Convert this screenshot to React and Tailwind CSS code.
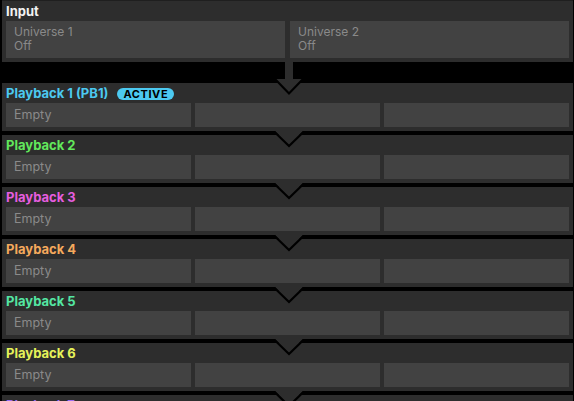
const playbacks = [
  { name: "Playback 1 (PB1)", color: "text-[#4cc9f0]", active: true },
  { name: "Playback 2", color: "text-[#62e85c]" },
  { name: "Playback 3", color: "text-[#e65ddf]" },
  { name: "Playback 4", color: "text-[#f5a95c]" },
  { name: "Playback 5", color: "text-[#54e6a3]" },
  { name: "Playback 6", color: "text-[#e6f25a]" },
  { name: "Playback 7", color: "text-[#9b6cf2]" },
];

// big arrow from the input block down into the first playback
function InputArrow() {
  return (
    <svg
      className="absolute left-[271px] top-[-21px]"
      width="32"
      height="36"
      viewBox="0 0 32 36"
    >
      <path d="M12 0H20V17H30L16 31L2 17H12Z" fill="#2d2d2d" />
      <polyline
        points="2,17 16,31.5 30,17"
        fill="none"
        stroke="#000"
        strokeWidth="2.2"
      />
    </svg>
  );
}

// small tab that links one playback to the next
function TabArrow() {
  return (
    <svg
      className="absolute left-[271px] top-[-4px]"
      width="32"
      height="18"
      viewBox="0 0 32 18"
    >
      <polygon points="2,0 30,0 16,14" fill="#2d2d2d" />
      <polyline
        points="1,0.5 16,15 31,0.5"
        fill="none"
        stroke="#000"
        strokeWidth="2.2"
      />
    </svg>
  );
}

function Playback({ pb, first }) {
  return (
    <div className="relative h-[48px] bg-[#2d2d2d] px-1 pt-px">
      {first ? <InputArrow /> : <TabArrow />}
      <div className="flex h-[19px] items-center gap-[9px]">
        <span className={`text-[13px] font-bold ${pb.color}`}>{pb.name}</span>
        {pb.active && (
          <span className="rounded-full bg-[#4cc9f0] px-[6px] text-[11px] font-bold leading-[12px] tracking-[0.6px] text-black">
            ACTIVE
          </span>
        )}
      </div>
      <div className="grid h-6 grid-cols-3 gap-1">
        {[0, 1, 2].map((i) => (
          <div key={i} className="flex items-center bg-[#424242] px-2">
            {i === 0 && <span className="text-[12.5px] text-[#8a8a8a]">Empty</span>}
          </div>
        ))}
      </div>
    </div>
  );
}

export default function App() {
  return (
    <div className="h-[401px] overflow-hidden bg-black pl-[2px] pr-px font-['Inter',sans-serif]">
      {/* Input */}
      <div className="h-[62px] border-t border-[#1f1f1f] bg-[#2d2d2d] px-1 pt-px">
        <div className="flex h-[19px] items-center text-[13px] font-bold text-[#f2f2f2]">
          Input
        </div>
        <div className="grid h-[37px] grid-cols-2 gap-[5px]">
          {["Universe 1", "Universe 2"].map((u) => (
            <div key={u} className="bg-[#424242] px-2 pt-1 text-[12px] leading-[14px] text-[#8a8a8a]">
              <div>{u}</div>
              <div>Off</div>
            </div>
          ))}
        </div>
      </div>

      <div className="mt-[21px] flex flex-col gap-1">
        {playbacks.map((pb, i) => (
          <Playback key={pb.name} pb={pb} first={i === 0} />
        ))}
      </div>
    </div>
  );
}
